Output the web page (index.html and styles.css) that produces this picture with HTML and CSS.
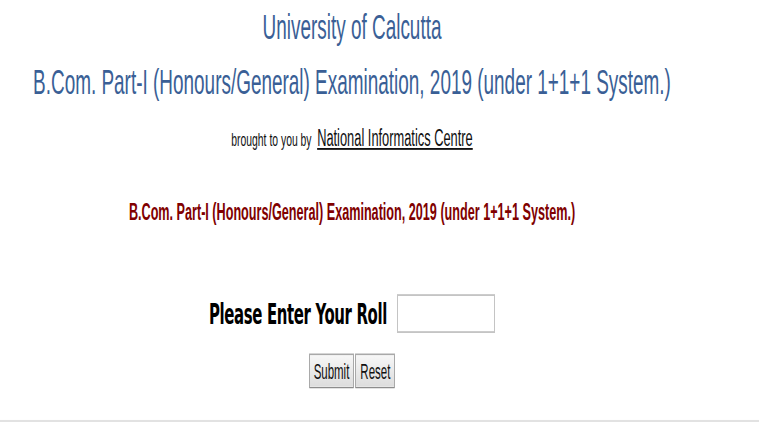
FILE: index.html
```html
<!DOCTYPE html>
<html lang="en">
<head>
  <meta charset="UTF-8">
  <meta name="viewport" content="width=device-width, initial-scale=1.0">
  <title>University of Calcutta - Results</title>
  <link rel="stylesheet" href="styles.css">
</head>
<body>
  <div class="page">
    <div class="uni-name">University of Calcutta</div>
    <div class="exam-name">B.Com. Part-I (Honours/General) Examination, 2019 (under 1+1+1 System.)</div>
    <div class="credit">
      <span class="credit-small">brought to you by</span>
      <a href="#" class="nic-link">National Informatics Centre</a>
    </div>
    <div class="exam-title">B.Com. Part-I (Honours/General) Examination, 2019 (under 1+1+1 System.)</div>

    <form id="rollForm">
      <div class="roll-row">
        <label for="roll" class="roll-label">Please Enter Your Roll</label>
        <input type="text" id="roll" name="roll" class="roll-input">
      </div>
      <div class="button-row">
        <button type="submit">Submit</button>
        <button type="reset">Reset</button>
      </div>
    </form>
  </div>
  <div class="bottom-bar"></div>
</body>
</html>
```

FILE: styles.css
```css
/* the original capture is stretched tall: lay out narrow, then stretch */
body {
  margin: 0;
  font-family: "Liberation Sans", Arial, sans-serif;
  background-color: #fff;
  color: #111;
  transform: scaleY(1.85);
  transform-origin: 0 0;
}

.page {
  width: 704px;
  text-align: center;
}

.uni-name {
  padding-top: 4.2px;
  font-size: 18.94px;
  color: #3a5f96;
}

.exam-name {
  margin-top: 8px;
  font-size: 18.94px;
  color: #3a5f96;
}

.credit {
  margin-top: 11.3px;
  font-size: 12.85px;
}

.credit-small {
  font-size: 10.4px;
  color: #111;
  margin-right: 2px;
}

.nic-link {
  color: #111;
  text-decoration: underline;
}

.exam-title {
  margin-top: 25.1px;
  font-size: 12.63px;
  font-weight: bold;
  color: #800000;
}

.roll-row {
  display: flex;
  justify-content: center;
  align-items: center;
  margin-top: 37.9px;
}

.roll-label {
  font-family: "DejaVu Sans", Verdana, sans-serif;
  font-weight: bold;
  font-size: 14.92px;
  letter-spacing: -0.35px;
  color: #000;
}

.roll-input {
  box-sizing: border-box;
  width: 98px;
  height: 20.5px;
  margin-left: 10px;
  padding: 0 4px;
  border: 1px solid #c4c4c4;
  outline: none;
}

.button-row {
  display: flex;
  justify-content: center;
  gap: 1px;
  margin-top: 10.8px;
}

button {
  box-sizing: border-box;
  height: 19.5px;
  padding: 0 4px;
  font-family: "Liberation Sans", Arial, sans-serif;
  font-size: 11.48px;
  color: #111;
  background: linear-gradient(#f7f7f7, #dcdcdc);
  border: 1px solid #a9a9a9;
  border-bottom-color: #8c8c8c;
  border-radius: 1px;
  cursor: pointer;
}

.bottom-bar {
  margin-top: 17.2px;
  height: 1.62px;
  background-color: #e2e2e2;
}
```
